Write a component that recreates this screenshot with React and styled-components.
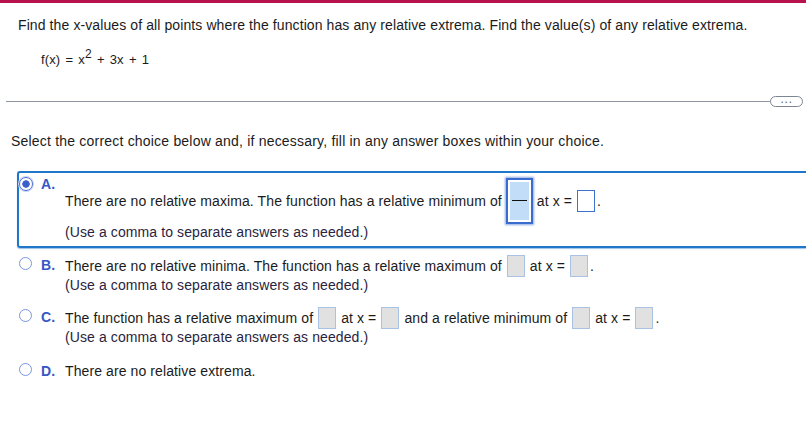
import React from "react";
import styled, { createGlobalStyle } from "styled-components";

const Global = createGlobalStyle`
  body {
    margin: 0;
    background: #fff;
    font-family: "Liberation Sans", Arial, sans-serif;
    color: #1b1b1b;
  }
`;

function App() {
  return (
    <Page>
      <Global />
      <TopBar />
      <Question>
        Find the x-values of all points where the function has any relative
        extrema. Find the value(s) of any relative extrema.
      </Question>
      <Func>
        f(x) = x<sup>2</sup> + 3x + 1
      </Func>
      <Divider>
        <span className="line" />
        <MoreButton>• • •</MoreButton>
      </Divider>
      <Instruction>
        Select the correct choice below and, if necessary, fill in any answer
        boxes within your choice.
      </Instruction>

      <SelectedBox>
        <Choice>
          <Radio selected />
          <Letter selected>A.</Letter>
          <Content>
            <Line tall>
              There are no relative maxima. The function has a relative minimum
              of
              <FractionBox>
                <span />
              </FractionBox>
              at x =
              <AnswerBox active />
              <Period>.</Period>
            </Line>
            <Hint>(Use a comma to separate answers as needed.)</Hint>
          </Content>
        </Choice>
      </SelectedBox>

      <Choice gap={7}>
        <Radio />
        <Letter>B.</Letter>
        <Content>
          <Line>
            There are no relative minima. The function has a relative maximum
            of
            <AnswerBox />
            at x =
            <AnswerBox />
            <Period>.</Period>
          </Line>
          <Hint>(Use a comma to separate answers as needed.)</Hint>
        </Content>
      </Choice>

      <Choice gap={14}>
        <Radio />
        <Letter>C.</Letter>
        <Content>
          <Line>
            The function has a relative maximum of
            <AnswerBox />
            at x =
            <AnswerBox />
            and a relative minimum of
            <AnswerBox />
            at x =
            <AnswerBox />
            <Period>.</Period>
          </Line>
          <Hint>(Use a comma to separate answers as needed.)</Hint>
        </Content>
      </Choice>

      <Choice gap={16}>
        <Radio />
        <Letter>D.</Letter>
        <Content>
          <Line short>There are no relative extrema.</Line>
        </Content>
      </Choice>
    </Page>
  );
}

const Page = styled.div`
  width: 806px;
  height: 441px;
  overflow: hidden;
  font-size: 14px;
  letter-spacing: 0.1px;
`;

const TopBar = styled.div`
  height: 3px;
  background: #b8124e;
`;

const Question = styled.p`
  margin: 12px 0 0 18px;
  line-height: 20px;
  white-space: nowrap;
`;

const Func = styled.p`
  margin: 15px 0 0 41px;
  line-height: 20px;
  font-size: 13px;
  word-spacing: 1.5px;
  sup {
    font-size: 12px;
    line-height: 0;
    vertical-align: 6px;
  }
`;

const Divider = styled.div`
  display: flex;
  align-items: center;
  margin: 26px 0 0 6px;
  height: 11px;
  .line {
    flex: 0 0 764px;
    height: 1px;
    background: #8d949e;
  }
`;

const MoreButton = styled.span`
  width: 31px;
  height: 9px;
  border: 1px solid #7d8592;
  border-radius: 6px;
  display: flex;
  align-items: center;
  justify-content: center;
  font-size: 5px;
  letter-spacing: 0.5px;
  color: #555;
`;

const Instruction = styled.p`
  margin: 24px 0 0 11px;
  line-height: 20px;
  white-space: nowrap;
  letter-spacing: 0.2px;
`;

const SelectedBox = styled.div`
  margin: 20px 0 0 17px;
  border: 2px solid #1f77c9;
  border-right: none;
  border-radius: 3px 0 0 3px;
  padding: 4px 0 6px;
  box-shadow: 0 1px 1px #9cc2e6;
  > div {
    margin-left: -19px;
  }
`;

const Choice = styled.div`
  display: grid;
  grid-template-columns: 19px 13px 33px 1fr;
  align-items: start;
  margin-top: ${(p) => (p.gap ? p.gap : 0)}px;
  white-space: nowrap;
  &::before {
    content: "";
  }
`;

const Radio = styled.span`
  grid-column: 2;
  box-sizing: border-box;
  width: ${(p) => (p.selected ? "14px" : "13px")};
  height: ${(p) => (p.selected ? "14px" : "13px")};
  margin-top: ${(p) => (p.selected ? "0" : "2px")};
  margin-left: ${(p) => (p.selected ? "0" : "0")};
  border-radius: 50%;
  border: 1.5px solid ${(p) => (p.selected ? "#4a6fd3" : "#7a95da")};
  background: ${(p) =>
    p.selected ? "radial-gradient(circle, #3c5fc8 0 3.4px, #fff 4px)" : "#fff"};
  box-shadow: ${(p) => (p.selected ? "0 0 0 1px #c6d3f2" : "none")};
`;

const Letter = styled.span`
  grid-column: 3;
  padding-left: 9px;
  font-weight: bold;
  color: #3656c8;
  line-height: ${(p) => (p.selected ? "14px" : "20px")};
`;

const Content = styled.div`
  grid-column: 4;
  display: flex;
  flex-direction: column;
`;

const Line = styled.div`
  display: flex;
  align-items: center;
  height: ${(p) => (p.tall ? "47px" : p.short ? "16px" : "22px")};
  margin-top: ${(p) => (p.short ? "2px" : "0")};
  gap: 4px;
`;

const Period = styled.span`
  margin-left: -3px;
`;

const Hint = styled.div`
  line-height: 16px;
  color: #2a2440;
`;

const AnswerBox = styled.span`
  box-sizing: border-box;
  display: inline-block;
  width: 18px;
  height: 22px;
  margin: 0 1px;
  background: ${(p) => (p.active ? "#fff" : "#e1e1e1")};
  border: ${(p) => (p.active ? "1.5px solid #3a72d0" : "1px solid #a9c1e3")};
`;

const FractionBox = styled.span`
  box-sizing: border-box;
  width: 27px;
  height: 46px;
  margin-top: 1px;
  border: 2px solid #3a6bcf;
  box-shadow: 0 0 2px 1px #8fa9e2;
  padding: 2px;
  background: #fff;
  display: flex;
  span {
    flex: 1;
    background: linear-gradient(
      to bottom,
      #c2ddf8 calc(50% - 1px),
      #111 calc(50% - 1px),
      #111 50%,
      #c2ddf8 50%
    );
    background-size: 15px 100%;
    background-repeat: no-repeat;
    background-position: center;
    background-color: #c2ddf8;
  }
`;

export default App;
